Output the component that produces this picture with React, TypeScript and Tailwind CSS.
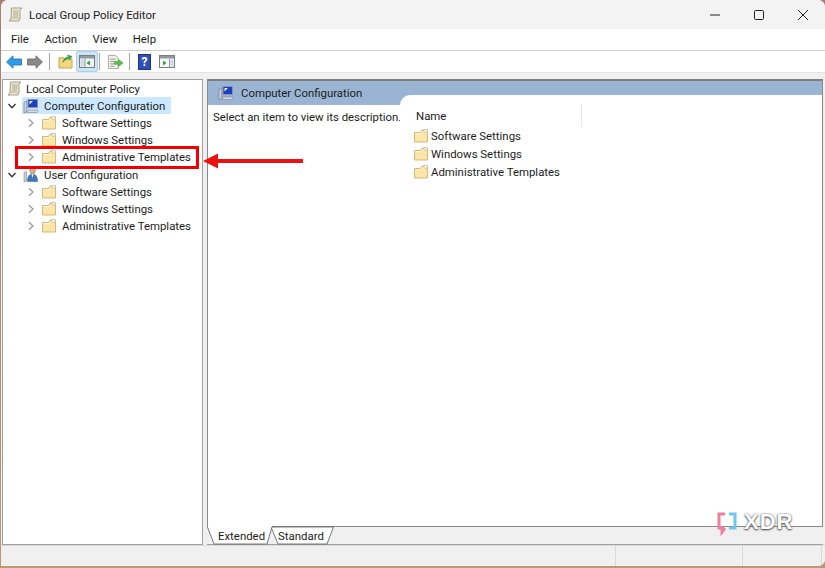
import React from "react";

const Folder = () => (
  <svg width="14" height="14" viewBox="0 0 14 14" className="shrink-0">
    <path d="M0.5 3.5 V13 H13.5 V1 H8 L6.5 3.5 Z" fill="#fbe5a8" stroke="#c8ab66" strokeWidth="0.8" />
    <path d="M1.5 4.6 H7.5 L9 2.2" fill="none" stroke="#fff6d8" strokeWidth="1" />
    <rect x="10" y="0.8" width="3.4" height="2.2" fill="#ffffff" stroke="#a9a38a" strokeWidth="0.5" />
  </svg>
);

const Scroll = () => (
  <svg width="15" height="15" viewBox="0 0 15 15" className="shrink-0">
    <path d="M3.5 1 H14 L12 3 V11.5 L11 14 H1 L3 11.5 Z" fill="#f0e8cc" stroke="#8f8a78" strokeWidth="0.8" />
    <path d="M5 4 H10.5 M5 6 H10.5 M5 8 H10.5 M4.5 10 H10" stroke="#9a9888" strokeWidth="0.8" />
    <path d="M1 14 C3 13 3 12 3 11.5 H11.5" fill="none" stroke="#b5ae94" strokeWidth="0.6" />
  </svg>
);

const Computer = () => (
  <svg width="16" height="16" viewBox="0 0 16 16" className="shrink-0">
    <rect x="5" y="1.5" width="9.5" height="8" fill="#1d3fc4" stroke="#8a94a8" strokeWidth="1" />
    <path d="M6.5 3 H10 L6.5 6.5 Z" fill="#e9f0ff" />
    <path d="M1 4 L3.8 3 V14 L1 15 Z" fill="#c9cfda" stroke="#6d7688" strokeWidth="0.6" />
    <path d="M5 12 H15 L14 14.5 H4 Z" fill="#d5dae3" stroke="#7d8698" strokeWidth="0.6" />
  </svg>
);

const UserIcon = () => (
  <svg width="16" height="16" viewBox="0 0 16 16" className="shrink-0">
    <path d="M1 5.5 L3.5 4.5 V14 L1 15 Z" fill="#c9cfda" stroke="#6d7688" strokeWidth="0.5" />
    <circle cx="9.5" cy="3.8" r="2.8" fill="#d8b28c" stroke="#7b5f45" strokeWidth="0.5" />
    <path d="M4.5 14.5 C4.5 9 6.5 7 9.5 7 C12.5 7 14.5 9 14.5 14.5 Z" fill="#3f77b8" stroke="#2d5a92" strokeWidth="0.5" />
    <path d="M8.5 7 L9.5 11 L10.5 7 Z" fill="#ffffff" />
  </svg>
);

const Chev = ({ open }: { open?: boolean }) => (
  <svg width="10" height="10" viewBox="0 0 10 10" className="shrink-0">
    {open ? (
      <path d="M1.5 3 L5 6.8 L8.5 3" fill="none" stroke="#333" strokeWidth="1.3" />
    ) : (
      <path d="M3 1.2 L7 5 L3 8.8" fill="none" stroke="#999" strokeWidth="1.2" />
    )}
  </svg>
);

const ConsoleIcon = ({ flip }: { flip?: boolean }) => (
  <svg width="16" height="13" viewBox="0 0 16 13" className="shrink-0">
    <rect x="0.5" y="0.5" width="15" height="12" fill="#f2f2f2" stroke="#7d7d7d" />
    <rect x="1" y="1" width="14" height="2.5" fill="#8f98a6" />
    {flip ? (
      <>
        <rect x="1.5" y="4.5" width="8" height="7" fill="#fff" />
        <path d="M10.5 4 V12.5" stroke="#9a9a9a" />
        <rect x="11.5" y="5" width="3" height="6.5" fill="#cfd8e6" />
        <path d="M4 5.5 L7.5 8 L4 10.5 Z" fill="#29a33a" />
      </>
    ) : (
      <>
        <rect x="1.5" y="4.5" width="4" height="7" fill="#cfd8e6" />
        <path d="M6 4 V12.5" stroke="#9a9a9a" />
        <path d="M11 5.5 L7.5 8 L11 10.5 Z" fill="#29a33a" />
      </>
    )}
  </svg>
);

const Sep = ({ cls }: { cls: string }) => <div className={cls} />;

const SubRow = ({ label }: { label: string }) => (
  <div className="flex items-center h-[17.2px] pl-[23px]">
    <Chev />
    <span className="ml-[6px]"><Folder /></span>
    <span className="ml-[6px] whitespace-nowrap">{label}</span>
  </div>
);

const ListRow = ({ label }: { label: string }) => (
  <div className="flex items-center h-[18px]">
    <Folder />
    <span className="ml-[3px] whitespace-nowrap">{label}</span>
  </div>
);

export default function App() {
  return (
    <div
      className="relative w-[825px] h-[568px] overflow-hidden bg-linear-to-b from-[#a97f73] to-[#b79a70] text-[#1c1c1c] text-[11.4px] leading-[16px]"
      style={{ fontFamily: 'Roboto, "Open Sans", sans-serif' }}
    >
      <div className="flex flex-col h-[566px] w-[824px] ml-[1px] rounded-t-[7px] rounded-br-[7px] bg-[#f0f0f0] overflow-hidden">
        {/* Title bar */}
        <div className="flex items-center h-[29px] bg-[#f3f3f3] shrink-0 pl-[7px]">
          <Scroll />
          <span className="ml-[6px] text-[#222]">Local Group Policy Editor</span>
          <div className="ml-auto flex items-center">
            <div className="w-[44px] flex justify-center">
              <svg width="12" height="12" viewBox="0 0 12 12"><path d="M1 6 H11" stroke="#222" strokeWidth="1" /></svg>
            </div>
            <div className="w-[44px] flex justify-center">
              <svg width="12" height="12" viewBox="0 0 12 12"><rect x="1.5" y="1.5" width="9" height="9" rx="1.2" fill="none" stroke="#222" strokeWidth="1" /></svg>
            </div>
            <div className="w-[44px] flex justify-center">
              <svg width="12" height="12" viewBox="0 0 12 12"><path d="M1 1 L11 11 M11 1 L1 11" stroke="#222" strokeWidth="1" /></svg>
            </div>
          </div>
        </div>
        {/* Menu */}
        <div className="flex items-center h-[22px] bg-white shrink-0 pl-[10px] pb-[2px] gap-[15.5px] border-b border-[#cfcfcf]">
          <span>File</span>
          <span>Action</span>
          <span>View</span>
          <span>Help</span>
        </div>
        {/* Toolbar */}
        <div className="flex items-center h-[22px] bg-white shrink-0 pl-[5px] border-b border-[#e4e4e4]">
          <svg width="16" height="14" viewBox="0 0 16 14" className="shrink-0"><path d="M0.5 7 L7 0.8 V4 H15.5 V10 H7 V13.2 Z" fill="#2e9be8" stroke="#1a6fb8" strokeWidth="0.8" /></svg>
          <svg width="16" height="14" viewBox="0 0 16 14" className="ml-[5px] shrink-0"><path d="M15.5 7 L9 0.8 V4 H0.5 V10 H9 V13.2 Z" fill="#8a8a8a" stroke="#666" strokeWidth="0.8" /></svg>
          <Sep cls="w-px h-[17px] bg-[#a6a6a6] ml-[6px]" />
          <svg width="15" height="15" viewBox="0 0 16 16" className="ml-[8px] shrink-0">
            <path d="M1 4 H6 L7 5.5 H15 V15 H1 Z" fill="#f2d77f" stroke="#b4953f" strokeWidth="0.8" />
            <path d="M5 9 C6 5 8 3.5 11 3 L10 1 L15 2.5 L12.5 6.5 L11.8 4.6 C9.5 5 7.5 6.5 5 9 Z" fill="#39a845" stroke="#1f7a2d" strokeWidth="0.4" />
          </svg>
          <div className="ml-[3px] w-[22px] h-[21px] flex items-center justify-center rounded-[2px] bg-[#cce4f7] border border-[#a8d2f2]">
            <ConsoleIcon />
          </div>
          <Sep cls="w-px h-[17px] bg-[#a6a6a6] ml-[1px]" />
          <svg width="17" height="16" viewBox="0 0 18 16" className="ml-[7px] shrink-0">
            <path d="M1.5 1 H9 L12 4 V15 H1.5 Z" fill="#f4f1e4" stroke="#8f8f8f" strokeWidth="0.8" />
            <path d="M3.5 5 H9 M3.5 7.5 H8 M3.5 10 H8 M3.5 12.5 H8" stroke="#77808c" strokeWidth="0.8" />
            <path d="M8 7.5 H12 V5 L17 9 L12 13 V10.5 H8 Z" fill="#58c24a" stroke="#379a34" strokeWidth="0.5" />
          </svg>
          <Sep cls="w-px h-[17px] bg-[#a6a6a6] ml-[5px]" />
          <div className="ml-[8px] w-[13px] h-[16px] bg-[#2f4fb5] border border-[#1c3387] flex items-center justify-center text-white font-bold text-[12px] leading-none">?</div>
          <div className="ml-[8px]"><ConsoleIcon flip /></div>
        </div>
        {/* Body */}
        <div className="flex flex-1 min-h-0 pl-[1px] pr-[2px] pt-[6px] bg-[#f0f0f0]">
          {/* Tree */}
          <div className="w-[201px] h-[466px] bg-white border border-[#a0a0a0] shrink-0">
            <div className="flex items-center h-[17.2px] pl-[4px]">
              <Scroll />
              <span className="ml-[4px] whitespace-nowrap">Local Computer Policy</span>
            </div>
            <div className="flex items-center h-[17.2px] pl-[4px]">
              <Chev open />
              <div className="ml-[5px] flex items-center h-[17px] w-[149px] bg-[#cce8ff] pl-[1px]">
                <Computer />
                <span className="ml-[5px] whitespace-nowrap">Computer Configuration</span>
              </div>
            </div>
            <SubRow label="Software Settings" />
            <SubRow label="Windows Settings" />
            <SubRow label="Administrative Templates" />
            <div className="flex items-center h-[17.2px] pl-[4px]">
              <Chev open />
              <span className="ml-[6px]"><UserIcon /></span>
              <span className="ml-[5px] whitespace-nowrap">User Configuration</span>
            </div>
            <SubRow label="Software Settings" />
            <SubRow label="Windows Settings" />
            <SubRow label="Administrative Templates" />
          </div>
          {/* Right */}
          <div className="ml-[4px] flex-1 flex flex-col min-w-0">
            <div className="flex flex-col h-[448px] bg-white border border-[#8a8a8a] border-t-2 border-t-[#7f7f7f]">
              <div className="flex flex-1 min-h-0">
                <div className="w-[192px] shrink-0 flex flex-col">
                  <div className="h-[24px] bg-[#9ab5d3] flex items-center pl-[10px]">
                    <Computer />
                    <span className="ml-[7px] whitespace-nowrap">Computer Configuration</span>
                  </div>
                  <div className="pl-[5px] pt-[4px] whitespace-nowrap">Select an item to view its description.</div>
                </div>
                <div className="flex-1 flex flex-col bg-[#9ab5d3]">
                  <div className="h-[14px] shrink-0" />
                  <div className="flex-1 bg-white rounded-tl-[10px] pl-[14px] pt-[9px]">
                    <div className="w-[168px] h-[23px] pl-[2px] flex items-center border-r border-[#e5e5e5]">Name</div>
                    <ListRow label="Software Settings" />
                    <ListRow label="Windows Settings" />
                    <ListRow label="Administrative Templates" />
                  </div>
                </div>
              </div>
            </div>
            {/* Tabs */}
            <div className="relative flex items-center h-[18px] pl-[11px] border-b border-[#a0a0a0] bg-[#f0f0f0]">
              <svg className="absolute left-0 top-[-1px]" width="130" height="19" viewBox="0 0 130 19">
                <path d="M64 1 H126.5 L120 18 H71 Z" fill="#ffffff" stroke="#6b6b6b" strokeWidth="0.9" />
                <path d="M0 0 H65 L60 18 H7 Z" fill="#ffffff" />
                <path d="M0 0 L7 18 H60 L65 1" fill="none" stroke="#6b6b6b" strokeWidth="0.9" />
              </svg>
              <span className="relative">Extended</span>
              <span className="relative ml-[13px]">Standard</span>
            </div>
          </div>
        </div>
        {/* Status */}
        <div className="flex h-[21px] shrink-0 bg-[#f0f0f0] border-t border-[#dcdcdc] pr-[3px]">
          <div className="flex-1" />
          <div className="w-[127px] border-l border-[#d9d9d9]" />
          <div className="w-[80px] border-l border-r border-[#d9d9d9]" />
        </div>
      </div>

      {/* Red highlight box */}
      <div className="absolute left-[15px] top-[146px] w-[184px] h-[23px] border-[3px] border-[#f00000]" />
      {/* Arrow */}
      <svg className="absolute left-[203px] top-[152px]" width="100" height="18" viewBox="0 0 100 18">
        <path d="M0 9 L15 1.5 V7 H100 V11 H15 V16.5 Z" fill="#ee1111" />
      </svg>
      {/* Watermark */}
      <div className="absolute left-[716px] top-[512px] flex items-start">
        <svg width="22" height="24" viewBox="0 0 22 24" className="shrink-0">
          <path d="M9 2 H3 V16 H6 V20 L9 16" fill="none" stroke="#ee7f9f" strokeWidth="3" />
          <path d="M13 2 H19 V16 H13" fill="none" stroke="#6ec5ee" strokeWidth="3" />
        </svg>
        <span
          className="ml-[6px] text-[22px] font-bold leading-[20px] tracking-[1px] text-white"
          style={{ fontFamily: '"Liberation Sans", sans-serif', textShadow: "0 1px 2px #444, 0 0 2px #666" }}
        >
          XDR
        </span>
      </div>
    </div>
  );
}
